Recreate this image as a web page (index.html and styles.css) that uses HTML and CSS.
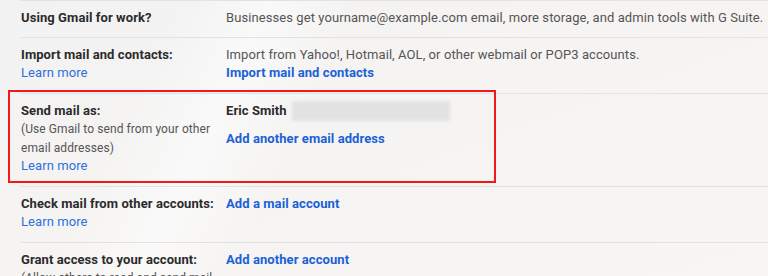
FILE: index.html
```html
<!DOCTYPE html>
<html>
<head>
<meta charset="utf-8">
<link rel="stylesheet" href="styles.css">
</head>
<body>
<div class="page">
  <div class="list">
    <div class="row first">
      <div class="label"><div class="title">Using Gmail for work?</div></div>
      <div class="value"><div class="text">Businesses get yourname@example.com email, more storage, and admin tools with G Suite.</div></div>
    </div>
    <div class="row">
      <div class="label"><div class="title">Import mail and contacts:</div><a class="learn">Learn more</a></div>
      <div class="value"><div class="text">Import from Yahoo!, Hotmail, AOL, or other webmail or POP3 accounts.</div><a class="action">Import mail and contacts</a></div>
    </div>
    <div class="row">
      <div class="label"><div class="title">Send mail as:</div><div class="desc">(Use Gmail to send from your other email addresses)</div><a class="learn">Learn more</a></div>
      <div class="value">
        <div class="sender"><span class="name">Eric Smith</span><span class="blur"></span></div>
        <a class="action spaced">Add another email address</a>
      </div>
    </div>
    <div class="row">
      <div class="label"><div class="title">Check mail from other accounts:</div><a class="learn">Learn more</a></div>
      <div class="value"><a class="action">Add a mail account</a></div>
    </div>
    <div class="row">
      <div class="label"><div class="title">Grant access to your account:</div><div class="desc">(Allow others to read and send mail on your behalf)</div></div>
      <div class="value"><a class="action">Add another account</a></div>
    </div>
  </div>
  <div class="highlight"></div>
</div>
</body>
</html>
```
FILE: styles.css
```css
html, body {
  margin: 0;
  padding: 0;
}
body {
  width: 768px;
  height: 276px;
  overflow: hidden;
  background: #f6f4f3;
  font-family: Roboto, "Liberation Sans", Arial, sans-serif;
}
.page {
  position: relative;
  height: 276px;
  overflow: hidden;
  background:
    linear-gradient(115deg, rgba(255,255,255,0) 20%, rgba(255,255,255,0.5) 30%, rgba(255,255,255,0) 40%),
    linear-gradient(160deg, #f3f2f2 0%, #f5f4f3 40%, #f8f5f3 100%);
}
.list {
  margin-left: 21px;
}
.row {
  display: flex;
  border-top: 1px solid #e3e2e1;
  padding: 8px 0 11px;
  font-size: 13px;
  line-height: 18px;
  letter-spacing: 0.08px;
}
.row.first {
  padding-bottom: 10px;
}
.label {
  width: 205px;
  flex: none;
  display: flex;
  flex-direction: column;
  align-items: flex-start;
}
.title {
  font-weight: bold;
  color: #2b2b2b;
}
.desc {
  font-size: 12px;
  line-height: 18.5px;
  color: #555;
  width: 200px;
}
.learn {
  color: #2f6fdc;
}
.value {
  display: flex;
  flex-direction: column;
  align-items: flex-start;
}
.text {
  color: #555;
}
.action {
  color: #1b61d6;
  font-weight: bold;
}
.spaced {
  margin-top: 10px;
}
.sender {
  display: flex;
  align-items: center;
  height: 18px;
}
.name {
  font-weight: bold;
  color: #2b2b2b;
}
.blur {
  display: inline-block;
  width: 158px;
  height: 20px;
  margin-left: 5px;
  background: #e3e2e2;
  filter: blur(1.5px);
}
.highlight {
  position: absolute;
  left: 8px;
  top: 90px;
  width: 484px;
  height: 89px;
  border: 2px solid #f01a1a;
}
```
